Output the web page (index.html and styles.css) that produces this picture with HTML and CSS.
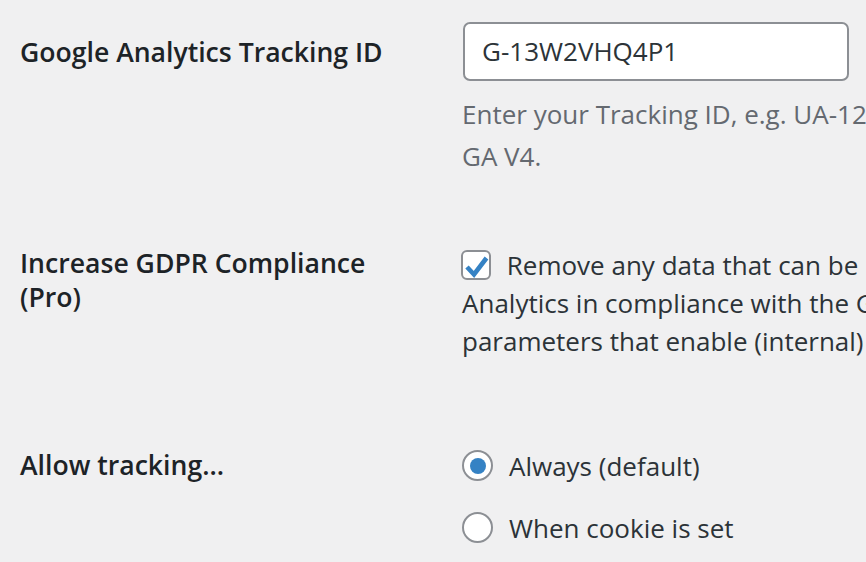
FILE: index.html
```html
<!DOCTYPE html>
<html lang="en">
<head>
<meta charset="utf-8">
<title>Settings</title>
<link rel="stylesheet" href="styles.css">
</head>
<body>
<div class="form-table">
  <div class="row row-id">
    <div class="th">Google Analytics Tracking ID</div>
    <div class="td">
      <div class="input">G-13W2VHQ4P1</div>
      <p class="description">Enter your Tracking ID, e.g. UA-123456789-1 or G-123ABC789 if you're using<br>GA V4.</p>
    </div>
  </div>
  <div class="row row-gdpr">
    <div class="th">Increase GDPR Compliance<br>(Pro)</div>
    <div class="td">
      <label class="check-label">
        <span class="checkbox"><svg viewBox="0 0 30 30" width="30" height="30"><polyline points="6,17 13,24.5 25.5,8" fill="none" stroke="#3582c4" stroke-width="4.6" stroke-linejoin="miter"/></svg></span>
        <span class="check-text">Remove any data that can be used to identify a visitor to make Google<br>Analytics in compliance with the GDPR. This also removes any query<br>parameters that enable (internal) site search tracking.</span>
      </label>
    </div>
  </div>
  <div class="row row-allow">
    <div class="th">Allow tracking...</div>
    <div class="td">
      <label class="radio-label"><span class="radio checked"></span><span>Always (default)</span></label>
      <label class="radio-label"><span class="radio"></span><span>When cookie is set</span></label>
    </div>
  </div>
</div>
</body>
</html>
```
FILE: styles.css
```css
html, body {
  margin: 0;
  padding: 0;
  background: #f0f0f1;
  overflow: hidden;
}
body {
  width: 866px;
  height: 562px;
  font-family: "Open Sans", "Noto Sans", sans-serif;
  color: #2c3338;
}
.form-table {
  width: 1800px;
  padding-left: 20px;
}
.row {
  display: flex;
  align-items: flex-start;
}
.th {
  width: 442px;
  flex: none;
  font-weight: 600;
  font-size: 26.6px;
  line-height: 34px;
  color: #1d2327;
}
.td {
  flex: none;
  width: 1300px;
  font-size: 26px;
  white-space: nowrap;
}
.row-id .th { padding-top: 35px; }
.row-id .td { padding-top: 22px; }
.input {
  box-sizing: border-box;
  width: 386px;
  height: 59px;
  margin-left: 1px;
  border: 2px solid #8c8f94;
  border-radius: 7px;
  background: #fff;
  padding-left: 17px;
  line-height: 55px;
  font-size: 26px;
  color: #2c3338;
}
.description {
  margin: 12px 0 0;
  color: #646970;
  font-size: 26px;
  line-height: 42px;
}
.row-gdpr { margin-top: 69px; }
.check-label {
  display: block;
  line-height: 38px;
  color: #2c3338;
}
.checkbox {
  display: inline-block;
  box-sizing: border-box;
  width: 30px;
  height: 30px;
  border: 2px solid #8c8f94;
  border-radius: 6px;
  background: #fff;
  vertical-align: -5px;
  margin-left: -1px;
  margin-right: 9px;
  position: relative;
}
.checkbox svg {
  position: absolute;
  left: -2px;
  top: -2px;
}
.row-allow { margin-top: 88px; }
.radio-label {
  display: flex;
  align-items: center;
  gap: 16px;
  height: 31px;
  margin-top: 2px;
  margin-bottom: 31px;
  color: #2c3338;
}
.radio {
  box-sizing: border-box;
  width: 31px;
  height: 31px;
  border: 2px solid #8c8f94;
  border-radius: 50%;
  background: #fff;
  flex: none;
  position: relative;
}
.radio.checked::after {
  content: "";
  position: absolute;
  left: 5.5px;
  top: 5.5px;
  width: 16px;
  height: 16px;
  border-radius: 50%;
  background: #3582c4;
}
```
